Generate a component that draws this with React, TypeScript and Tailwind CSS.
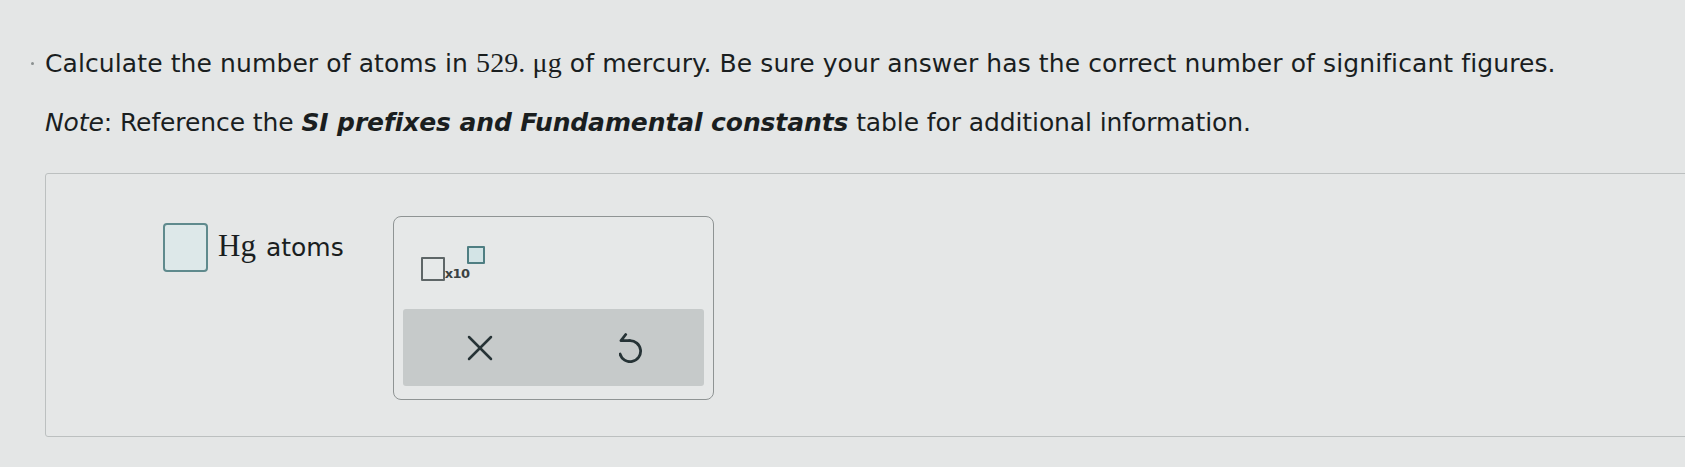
import { X } from 'lucide-react';

const SANS = "font-['DejaVu_Sans',Verdana,sans-serif]";

function UndoIcon() {
  return (
    <svg width="24" height="30" viewBox="0 0 24 30" fill="none" stroke="#263336" strokeWidth="2.8" strokeLinecap="round" strokeLinejoin="round">
      <path d="M6.7 1.5 L2 7.7 L10.5 7.7" />
      <path d="M10.5 7.7 A 10.5 10.5 0 1 1 1 21" />
    </svg>
  );
}

/** Mantissa box, "x10" and an exponent box. */
function SciNotation() {
  return (
    <div className="flex h-[35px] items-stretch">
      <div className="h-[24px] w-[24px] self-end rounded-[1px] border-2 border-[#5e6667] bg-[#e6e9e9]" />
      <span className={`${SANS} mb-[1px] self-end text-[13px] font-semibold leading-none tracking-[-0.5px] text-[#3a4142]`}>x10</span>
      <div className="-ml-[3px] h-[18px] w-[18px] self-start rounded-[1px] border-2 border-[#4f7e82] bg-[#d3e4e6]" />
    </div>
  );
}

export default function App() {
  return (
    <div className={`${SANS} h-[467px] w-full overflow-hidden bg-[#e4e6e6] text-[#1a1e1f]`}>
      <div className="flex items-center pl-[31px] pt-[47px]">
        <span className="mr-[11px] h-[3px] w-[3px] rounded-full bg-[#8b9090]" />
        <p className="text-[25px] leading-[32px] whitespace-nowrap tracking-[0.1px]">
          Calculate the number of atoms in{' '}
          <span className="font-['Liberation_Serif',serif] text-[28px]">529. μg</span> of
          mercury. Be sure your answer has the correct number of significant figures.
        </p>
      </div>

      <p className="mt-[27px] pl-[45px] text-[25px] leading-[32px] whitespace-nowrap tracking-[-0.1px]">
        <i>Note</i>: Reference the <b className="italic">SI prefixes and Fundamental constants</b> table
        for additional information.
      </p>

      <div className="ml-[45px] mt-[34px] h-[264px] w-[1700px] rounded-[3px] border border-[#bcc0c0] bg-[#e5e7e7] pl-[117px] pt-[42px]">
        <div className="flex items-start">
          <div className="mt-[7px] h-[49px] w-[45px] rounded-[4px] border-2 border-[#5f8a8d] bg-[#dde8e9]" />
          <div className="ml-[10px] mt-[12px] whitespace-nowrap leading-[36px]">
            <span className="font-['Liberation_Serif',serif] text-[31px]">Hg</span>
            <span className="ml-[10px] text-[25px]">atoms</span>
          </div>

          <div className="ml-[49px] flex h-[184px] w-[321px] flex-col rounded-[8px] border-[1.5px] border-[#8f9494] bg-[#e6e8e8] px-[9px] pt-[29px]">
            <div className="ml-[18px]">
              <SciNotation />
            </div>
            <div className="mt-[28px] grid h-[77px] grid-cols-2 items-center rounded-[3px] bg-[#c6caca]">
              <div className="flex justify-center pl-[4px]">
                <X size={44} strokeWidth={1.35} color="#263336" />
              </div>
              <div className="flex justify-center pl-[6px]">
                <UndoIcon />
              </div>
            </div>
          </div>
        </div>
      </div>
    </div>
  );
}
